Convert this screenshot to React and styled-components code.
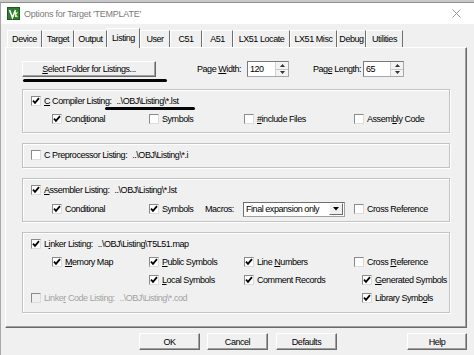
import styled, { createGlobalStyle } from "styled-components";

const Global = createGlobalStyle`
  html, body {
    margin: 0;
    padding: 0;
    background: #f0f0f0;
  }
  body {
    font-family: "Liberation Sans", Arial, sans-serif;
    font-size: 9px;
    letter-spacing: -0.45px;
    color: #000;
  }
`;

const Screen = styled.div`
  position: relative;
  width: 474px;
  height: 355px;
  overflow: hidden;
  background: #f0f0f0;
`;

const BehindStrip = styled.div`
  height: 2px;
  background: #c9c9c9;
  border-bottom: 1px solid #8f8f8f;
`;

const Window = styled.div`
  border-left: 1px solid #a9a9a9;
  height: 352px;
  box-sizing: border-box;
`;

const TitleBar = styled.div`
  display: flex;
  align-items: center;
  height: 21px;
  background: #fff;
  padding-left: 6px;
`;

const Title = styled.span`
  margin-left: 4px;
  color: #7b7b7b;
  letter-spacing: -0.25px;
  flex: 1;
`;

const CloseBox = styled.div`
  width: 30px;
  display: flex;
  justify-content: center;
  margin-right: 3px;
`;

const Body = styled.div`
  padding: 4px 7px 0 4px;
`;

const Tabs = styled.div`
  display: flex;
  align-items: flex-end;
  height: 19px;
  padding-left: 2px;
`;

const Tab = styled.div`
  box-sizing: border-box;
  width: ${(p) => p.$w}px;
  height: ${(p) => (p.$active ? 20 : 17)}px;
  margin-bottom: ${(p) => (p.$active ? -1 : 0)}px;
  display: flex;
  align-items: center;
  justify-content: center;
  padding-bottom: ${(p) => (p.$active ? 2 : 0)}px;
  border-top: 1px solid #fff;
  border-left: 1px solid #fff;
  border-right: 1px solid #6f6f6f;
  background: #f0f0f0;
  position: relative;
  z-index: ${(p) => (p.$active ? 2 : 1)};
  white-space: nowrap;
`;

const Panel = styled.div`
  box-sizing: border-box;
  height: 281px;
  border-top: 1px solid #fff;
  border-left: 1px solid #fff;
  border-right: 1px solid #6a6a6a;
  border-bottom: 1px solid #6a6a6a;
  box-shadow: inset -1px -1px 0 #a0a0a0;
  padding: 13px 0 0 16px;
  display: flex;
  flex-direction: column;
  gap: 10px;
`;

const TopRow = styled.div`
  display: flex;
  align-items: center;
  height: 16px;
  margin-bottom: 2px;
`;

const Button = styled.div`
  box-sizing: border-box;
  width: ${(p) => p.$w}px;
  height: ${(p) => p.$h || 16}px;
  display: flex;
  align-items: center;
  justify-content: center;
  background: #f0f0f0;
  border-top: 1px solid #fff;
  border-left: 1px solid #fff;
  border-right: 1px solid #6a6a6a;
  border-bottom: 1px solid #6a6a6a;
  box-shadow: inset -1px -1px 0 #a0a0a0;
  margin-left: ${(p) => p.$ml || 0}px;
  flex: none;
  white-space: nowrap;
`;

const Cell = styled.div`
  width: ${(p) => p.$w}px;
  flex: none;
  display: flex;
  align-items: center;
  white-space: nowrap;
`;

const SpinField = styled.div`
  box-sizing: border-box;
  width: ${(p) => p.$w}px;
  height: 16px;
  display: flex;
  background: #fff;
  border: 1px solid #a8a8a8;
  border-top-color: #7a7a7a;
  border-left-color: #7a7a7a;
  flex: none;
`;

const SpinText = styled.div`
  flex: 1;
  padding: 2px 0 0 2px;
`;

const SpinButtons = styled.div`
  width: 12px;
  display: flex;
  flex-direction: column;
  border-left: 1px solid #d0d0d0;
`;

const SpinArrow = styled.div`
  flex: 1;
  display: flex;
  align-items: center;
  justify-content: center;
  background: #f3f3f3;
  border-bottom: ${(p) => (p.$top ? "1px solid #c8c8c8" : "none")};
`;

const Group = styled.div`
  box-sizing: border-box;
  width: 428px;
  height: ${(p) => p.$h}px;
  border: 1px solid #c3c3c3;
  box-shadow: 1px 1px 0 #fff, inset 1px 1px 0 #fff;
  padding: 2px 0 0 0;
  display: flex;
  flex-direction: column;
`;

const Row = styled.div`
  display: flex;
  align-items: center;
  height: ${(p) => p.$h || 18}px;
  padding-left: ${(p) => p.$indent}px;
`;

const CheckLabel = styled.div`
  display: flex;
  align-items: center;
  gap: 3px;
  white-space: nowrap;
  color: ${(p) => (p.$disabled ? "#a3a3a3" : "#000")};
`;

const Box = styled.span`
  box-sizing: border-box;
  width: 10px;
  height: 10px;
  flex: none;
  display: flex;
  align-items: center;
  justify-content: center;
  background: ${(p) => (p.$disabled ? "#f0f0f0" : "#fff")};
  border-top: 1px solid #8a8a8a;
  border-left: 1px solid #8a8a8a;
  border-right: 1px solid #dcdcdc;
  border-bottom: 1px solid #dcdcdc;
`;

const Path = styled.span`
  margin-left: 5px;
`;

const Key = styled.u`
  text-decoration: underline;
  text-underline-offset: 1px;
`;

const Select = styled.div`
  box-sizing: border-box;
  width: 102px;
  height: 15px;
  margin-right: 9px;
  display: flex;
  align-items: center;
  background: #fff;
  border: 1px solid #a0a0a0;
  border-top-color: #6f6f6f;
  border-left-color: #6f6f6f;
  flex: none;
`;

const SelectText = styled.span`
  flex: 1;
  padding-left: 2px;
`;

const SelectArrow = styled.div`
  box-sizing: border-box;
  width: 14px;
  height: 12px;
  margin-right: 1px;
  display: flex;
  align-items: center;
  justify-content: center;
  background: #f0f0f0;
  border-top: 1px solid #fff;
  border-left: 1px solid #fff;
  border-right: 1px solid #6a6a6a;
  border-bottom: 1px solid #6a6a6a;
`;

const ButtonRow = styled.div`
  display: flex;
  align-items: center;
  margin-top: 5px;
  padding-left: 134px;
  gap: 7px;
`;

const Spacer = styled.div`
  flex: 1;
`;

const Scribble = styled.div`
  position: absolute;
  left: ${(p) => p.$x}px;
  top: ${(p) => p.$y}px;
  width: ${(p) => p.$w}px;
  height: 3px;
  background: #050505;
  border-radius: 2px;
`;

function AppIcon() {
  return (
    <svg width="13" height="13" viewBox="0 0 13 13">
      <rect x="0" y="0" width="13" height="13" fill="#2f7d33" />
      <rect x="0.5" y="0.5" width="12" height="12" fill="none" stroke="#1c5a20" />
      <path d="M2.5 3 L5.5 10.5 L8.5 3" fill="none" stroke="#fff" strokeWidth="1.6" />
      <path d="M8.5 5 L8.5 10 M8.5 8 L10.5 10 M8.5 8 L10.5 5" fill="none" stroke="#e8f5a0" strokeWidth="1.1" />
    </svg>
  );
}

function CloseIcon() {
  return (
    <svg width="9" height="9" viewBox="0 0 9 9">
      <path d="M0.5 0.5 L8.5 8.5 M8.5 0.5 L0.5 8.5" stroke="#8a8a8a" strokeWidth="0.9" />
    </svg>
  );
}

function Check({ checked, disabled, children }) {
  return (
    <CheckLabel $disabled={disabled}>
      <Box $disabled={disabled}>
        {checked && (
          <svg width="8" height="8" viewBox="0 0 8 8">
            <path d="M1 3.6 L3 5.8 L7 1.2" fill="none" stroke="#000" strokeWidth="1.8" />
          </svg>
        )}
      </Box>
      <span>{children}</span>
    </CheckLabel>
  );
}

function Spin({ value, w }) {
  return (
    <SpinField $w={w}>
      <SpinText>{value}</SpinText>
      <SpinButtons>
        <SpinArrow $top>
          <svg width="5" height="3" viewBox="0 0 5 3">
            <path d="M0 3 L2.5 0 L5 3 Z" fill="#333" />
          </svg>
        </SpinArrow>
        <SpinArrow>
          <svg width="5" height="3" viewBox="0 0 5 3">
            <path d="M0 0 L2.5 3 L5 0 Z" fill="#333" />
          </svg>
        </SpinArrow>
      </SpinButtons>
    </SpinField>
  );
}

const tabs = [
  ["Device", 35],
  ["Target", 32],
  ["Output", 33],
  ["Listing", 33, true],
  ["User", 30],
  ["C51", 32],
  ["A51", 31],
  ["LX51 Locate", 57],
  ["LX51 Misc", 47],
  ["Debug", 29],
  ["Utilities", 37],
];

export default function App() {
  return (
    <Screen>
      <Global />
      <BehindStrip />
      <Window>
        <TitleBar>
          <AppIcon />
          <Title>Options for Target 'TEMPLATE'</Title>
          <CloseBox>
            <CloseIcon />
          </CloseBox>
        </TitleBar>
        <Body>
          <Tabs>
            {tabs.map(([label, w, active]) => (
              <Tab key={label} $w={w} $active={active}>
                {label}
              </Tab>
            ))}
          </Tabs>
          <Panel>
            <TopRow>
              <Button $w={134}>
                <span>
                  <Key>S</Key>elect Folder for Listings...
                </span>
              </Button>
              <Cell $w={41} />
              <Cell $w={50}>
                <span>
                  Page <Key>W</Key>idth:
                </span>
              </Cell>
              <Spin value="120" w={42} />
              <Cell $w={24} />
              <Cell $w={50}>
                <span>
                  Pag<Key>e</Key> Length:
                </span>
              </Cell>
              <Spin value="65" w={41} />
            </TopRow>

            <Group $h={44}>
              <Row $indent={8}>
                <Check checked>
                  <Key>C</Key> Compiler Listing:
                  <Path>..\OBJ\Listing\*.lst</Path>
                </Check>
              </Row>
              <Row $indent={29}>
                <Cell $w={97}>
                  <Check checked>
                    Cond<Key>i</Key>tional
                  </Check>
                </Cell>
                <Cell $w={95}>
                  <Check>Symbols</Check>
                </Cell>
                <Cell $w={110}>
                  <Check>
                    <Key>#</Key>include Files
                  </Check>
                </Cell>
                <Check>
                  Assem<Key>b</Key>ly Code
                </Check>
              </Row>
            </Group>

            <Group $h={25}>
              <Row $indent={8}>
                <Check>
                  C Preprocessor Listing:
                  <Path>..\OBJ\Listing\*.i</Path>
                </Check>
              </Row>
            </Group>

            <Group $h={44}>
              <Row $indent={8}>
                <Check checked>
                  <Key>A</Key>ssembler Listing:
                  <Path>..\OBJ\Listing\*.lst</Path>
                </Check>
              </Row>
              <Row $indent={29} $h={20}>
                <Cell $w={97}>
                  <Check checked>Conditional</Check>
                </Cell>
                <Cell $w={56}>
                  <Check checked>Symbols</Check>
                </Cell>
                <Cell $w={38}>Macros:</Cell>
                <Select>
                  <SelectText>Final expansion only</SelectText>
                  <SelectArrow>
                    <svg width="6" height="4" viewBox="0 0 6 4">
                      <path d="M0 0 L3 3.5 L6 0 Z" fill="#000" />
                    </svg>
                  </SelectArrow>
                </Select>
                <Check>Cross Reference</Check>
              </Row>
            </Group>

            <Group $h={81}>
              <Row $indent={8}>
                <Check checked>
                  L<Key>i</Key>nker Listing:
                  <Path>..\OBJ\Listing\T5L51.map</Path>
                </Check>
              </Row>
              <Row $indent={29}>
                <Cell $w={97}>
                  <Check checked>
                    <Key>M</Key>emory Map
                  </Check>
                </Cell>
                <Cell $w={95}>
                  <Check checked>
                    <Key>P</Key>ublic Symbols
                  </Check>
                </Cell>
                <Cell $w={110}>
                  <Check checked>
                    Line <Key>N</Key>umbers
                  </Check>
                </Cell>
                <Check>
                  Cross <Key>R</Key>eference
                </Check>
              </Row>
              <Row $indent={29}>
                <Cell $w={97} />
                <Cell $w={95}>
                  <Check checked>
                    <Key>L</Key>ocal Symbols
                  </Check>
                </Cell>
                <Cell $w={118}>
                  <Check checked>Comment Records</Check>
                </Cell>
                <Check checked>
                  <Key>G</Key>enerated Symbols
                </Check>
              </Row>
              <Row $indent={8}>
                <Cell $w={331}>
                  <Check disabled>
                    Linke<Key>r</Key> Code Listing:
                    <Path>..\OBJ\Listing\*.cod</Path>
                  </Check>
                </Cell>
                <Check checked>
                  Library Symb<Key>o</Key>ls
                </Check>
              </Row>
            </Group>
          </Panel>

          <ButtonRow>
            <Button $w={61} $h={17}>OK</Button>
            <Button $w={61} $h={17}>Cancel</Button>
            <Button $w={61} $h={17} $ml={1}>Defaults</Button>
            <Spacer />
            <Button $w={60} $h={17}>Help</Button>
          </ButtonRow>
        </Body>
      </Window>
      <Scribble $x={23} $y={79} $w={144} />
      <Scribble $x={105} $y={107} $w={90} />
    </Screen>
  );
}
